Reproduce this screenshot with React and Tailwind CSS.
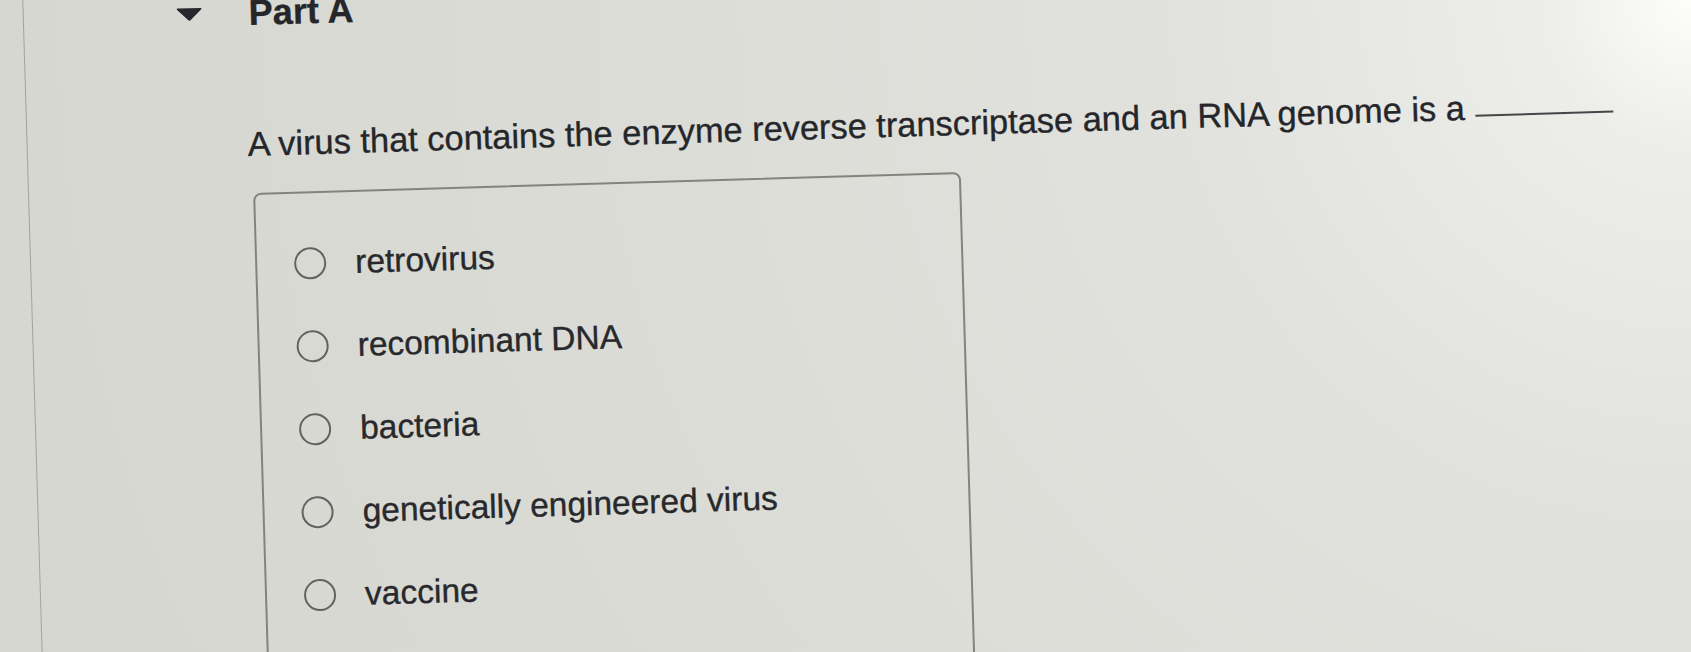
import React from "react";

const options = [
  "retrovirus",
  "recombinant DNA",
  "bacteria",
  "genetically engineered virus",
  "vaccine",
];

function Caret() {
  return (
    <svg width="27" height="15" viewBox="0 0 27 15" className="shrink-0">
      <path
        d="M2 1.5 L25 1.5 Q26.5 1.5 25.6 2.8 L14.6 13.6 Q13.5 14.6 12.4 13.6 L1.4 2.8 Q0.5 1.5 2 1.5 Z"
        fill="#26282d"
      />
    </svg>
  );
}

export default function App() {
  return (
    <div
      className="relative w-full h-[652px] overflow-hidden bg-[radial-gradient(circle_at_100%_0%,#fdfdfc_0%,#ededea_8%,#e1e1dd_28%,#dadad5_70%,#d6d6d1_100%)]"
      style={{ fontFamily: '"Liberation Sans", Arial, Helvetica, sans-serif' }}
    >
      {/* the photo is tilted a little, so the whole sheet is turned */}
      <div className="flex -mt-[30px] -ml-[20px] w-[1740px] h-[740px] origin-[270px_186px] rotate-[-1.7deg]">
        {/* left gutter */}
        <div className="w-[48px] h-full border-r-[1.5px] border-[#a3a39e] shrink-0" />

        <div className="flex flex-col pt-[30px] pl-[220px] text-[#24262a] [-webkit-text-stroke:0.35px_#24262a]">
          {/* part header */}
          <div className="flex items-start h-[36px] -mt-[5px]">
            <div className="-ml-[68px] mt-[10px]">
              <Caret />
            </div>
            <h2 className="ml-[46px] text-[36px] leading-[36px] font-bold">Part A</h2>
          </div>

          {/* question */}
          <p className="mt-[93px] text-[34.4px] leading-[40px] whitespace-nowrap">
            A virus that contains the enzyme reverse transcriptase and an RNA genome is a
            <span className="inline-block w-[138px] h-[2px] ml-[10px] mb-[3px] bg-[#45464a]" />
          </p>

          {/* answer choices */}
          <div className="mt-[29px] ml-[4px] w-[708px] h-[600px] border-2 border-[#84847f] rounded-[8px] pt-[28px] pl-[37px]">
            {options.map((o) => (
              <label key={o} className="flex items-center h-[83px]">
                <span className="w-[32px] h-[32px] rounded-full border-[2.5px] border-[#626262] shrink-0" />
                <span className="ml-[29px] text-[33.5px] leading-[40px] text-[#28292c] whitespace-nowrap">
                  {o}
                </span>
              </label>
            ))}
          </div>
        </div>
      </div>
    </div>
  );
}
